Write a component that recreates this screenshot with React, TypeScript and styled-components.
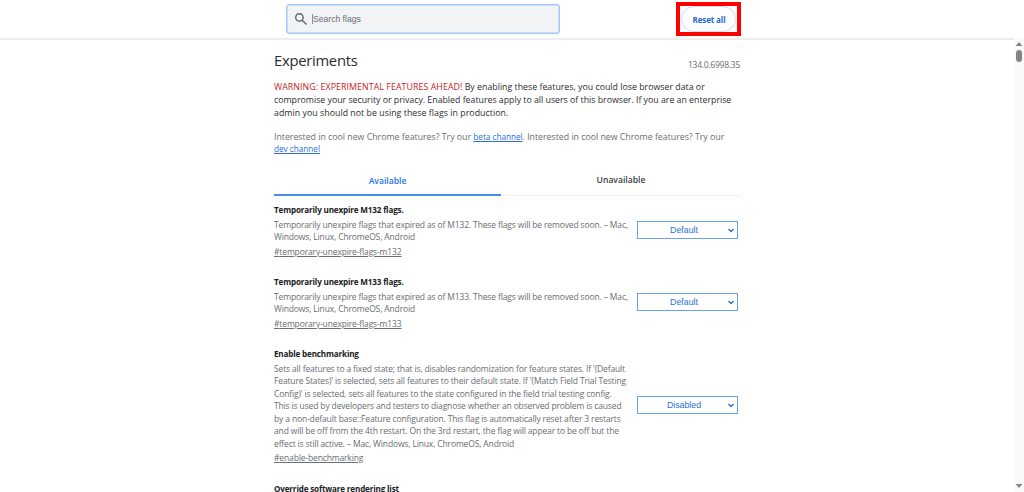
import React from "react";
import styled, { createGlobalStyle } from "styled-components";

const GlobalStyle = createGlobalStyle`
  * {
    box-sizing: border-box;
  }

  body {
    margin: 0;
    overflow: hidden;
    background: #fff;
    color: #2c2d30;
    font-family: "Open Sans", "Noto Sans", sans-serif;
  }
`;

const Page = styled.div`
  display: grid;
  grid-template-columns: 1014px 10px;
  grid-template-rows: 38px 454px;
  width: 1024px;
  height: 492px;
  overflow: hidden;
`;

const Header = styled.header`
  grid-column: 1 / 3;
  display: flex;
  align-items: flex-start;
  padding: 2px 283px 0 286px;
`;

const SearchBox = styled.div`
  display: flex;
  align-items: center;
  width: 274px;
  height: 30px;
  margin-top: 2px;
  padding-left: 7px;
  background: #f1f3f4;
  border: 1px solid #a3c5f8;
  border-radius: 3px;
  box-shadow: inset 0 0 0 0.5px #a3c5f8;
`;

const Caret = styled.span`
  width: 1px;
  height: 10px;
  margin-left: 4px;
  background: #8b8d90;
`;

const Placeholder = styled.span`
  font-family: "Liberation Sans", Arial, sans-serif;
  font-size: 8.6px;
  line-height: 12px;
  color: #6b6e72;
`;

const ResetFrame = styled.div`
  display: flex;
  align-items: center;
  justify-content: center;
  width: 65px;
  height: 34px;
  margin-left: auto;
  border: 4px solid #fe0000;
`;

const ResetButton = styled.button`
  width: 55px;
  height: 26px;
  padding: 0 0 0 1px;
  background: #fff;
  border: 1px solid #c9dcfa;
  border-radius: 13px;
  color: #2468d4;
  font-family: inherit;
  font-size: 8px;
  font-weight: 700;
  letter-spacing: -0.1px;
  white-space: nowrap;
`;

const Main = styled.main`
  padding: 0 273px 0 274px;
  border-top: 2px solid #ededee;
  overflow: hidden;
`;

const TitleBar = styled.div`
  display: flex;
  align-items: center;
  justify-content: space-between;
  height: 41px;
`;

const Title = styled.h1`
  margin: 0 0 2px;
  color: #2c2d30;
  font-size: 14.8px;
  font-weight: 400;
  letter-spacing: -0.28px;
`;

const Version = styled.span`
  margin: 8px 1px 0 0;
  color: #6b6e72;
  font-size: 8.5px;
  letter-spacing: -0.25px;
`;

interface LineProps {
  $spacing?: number;
}

const Line = styled.span<LineProps>`
  display: block;
  letter-spacing: ${(props) => props.$spacing ?? 0}px;
  white-space: nowrap;
`;

const Blurb = styled.p`
  margin: 0;
  font-size: 8.8px;
  line-height: 13.1px;
`;

const Promo = styled.p`
  margin: 10.5px 0 0;
  color: #6b6e72;
  font-size: 8.8px;
  line-height: 12.7px;
`;

const Warning = styled.span`
  color: #c5221f;
  letter-spacing: 0.08px;
`;

const ChannelLink = styled.a`
  color: #2a6fdc;
  font-size: 8.2px;
  text-decoration: underline;
`;

const Tabs = styled.div`
  display: flex;
  height: 39.5px;
`;

interface TabProps {
  $active?: boolean;
}

const Tab = styled.div<TabProps>`
  display: flex;
  align-items: center;
  justify-content: center;
  width: ${(props) => (props.$active ? "227px" : "240px")};
  padding-top: ${(props) => (props.$active ? "12px" : "10px")};
  border-bottom: ${(props) => (props.$active ? "2px solid #4a8bee" : "1px solid #f1f1f2")};
  color: ${(props) => (props.$active ? "#1a73e8" : "#3c4043")};
  font-size: 8.6px;
  font-weight: 600;
`;

const FlagList = styled.div`
  padding-top: 8.7px;
`;

const FlagRow = styled.section`
  display: flex;
  align-items: center;
  justify-content: space-between;
  margin-bottom: 18.3px;
  padding-right: 3px;
`;

const FlagText = styled.div`
  width: 360px;
  color: #6b6e72;
  font-size: 8.5px;
  line-height: 12.5px;
  letter-spacing: -0.14px;
`;

const FlagName = styled.h2`
  margin: 0 0 2px;
  color: #202124;
  font-size: 8.1px;
  font-weight: 700;
  line-height: 12.5px;
  letter-spacing: -0.16px;
  white-space: nowrap;
`;

const FlagLine = styled.span`
  display: block;
  white-space: nowrap;
`;

const Permalink = styled.a`
  display: block;
  width: max-content;
  margin-top: 1.7px;
  text-decoration: underline;
`;

const Select = styled.div`
  display: flex;
  align-items: center;
  width: 101px;
  height: 18px;
  margin-bottom: 2.4px;
  padding: 0 3px 0 2px;
  border: 1px solid #6ba0f0;
  color: #2a6fdc;
  font-family: "Liberation Sans", Arial, sans-serif;
  font-size: 8.8px;
`;

const SelectValue = styled.span`
  flex: 1;
  text-align: center;
`;

const Scrollbar = styled.div`
  display: flex;
  flex-direction: column;
  align-items: center;
  padding: 4px 0 4px;
  background: #fafafa;
`;

const Thumb = styled.div`
  width: 6px;
  height: 12px;
  margin-top: 4px;
  margin-bottom: auto;
  background: #858585;
  border-radius: 3px;
`;

interface Flag {
  name: string;
  lines: string[];
  id: string;
  value: string;
}

const flags: Flag[] = [
  {
    name: "Temporarily unexpire M132 flags.",
    lines: [
      "Temporarily unexpire flags that expired as of M132. These flags will be removed soon. – Mac,",
      "Windows, Linux, ChromeOS, Android",
    ],
    id: "temporary-unexpire-flags-m132",
    value: "Default",
  },
  {
    name: "Temporarily unexpire M133 flags.",
    lines: [
      "Temporarily unexpire flags that expired as of M133. These flags will be removed soon. – Mac,",
      "Windows, Linux, ChromeOS, Android",
    ],
    id: "temporary-unexpire-flags-m133",
    value: "Default",
  },
  {
    name: "Enable benchmarking",
    lines: [
      "Sets all features to a fixed state; that is, disables randomization for feature states. If '(Default",
      "Feature States)' is selected, sets all features to their default state. If '(Match Field Trial Testing",
      "Config)' is selected, sets all features to the state configured in the field trial testing config.",
      "This is used by developers and testers to diagnose whether an observed problem is caused",
      "by a non-default base::Feature configuration. This flag is automatically reset after 3 restarts",
      "and will be off from the 4th restart. On the 3rd restart, the flag will appear to be off but the",
      "effect is still active. – Mac, Windows, Linux, ChromeOS, Android",
    ],
    id: "enable-benchmarking",
    value: "Disabled",
  },
];

function FlagEntry({ flag }: { flag: Flag }) {
  return (
    <FlagRow>
      <FlagText>
        <FlagName>{flag.name}</FlagName>
        {flag.lines.map((line) => (
          <FlagLine key={line}>{line}</FlagLine>
        ))}
        <Permalink>#{flag.id}</Permalink>
      </FlagText>
      <Select>
        <SelectValue>{flag.value}</SelectValue>
        <svg width="6" height="6" viewBox="0 0 6 6" fill="none" stroke="#2a6fdc" strokeWidth="1.4">
          <path d="M0.5 2l2.5 2.5L5.5 2" />
        </svg>
      </Select>
    </FlagRow>
  );
}

function App() {
  return (
    <Page>
      <GlobalStyle />
      <Header>
        <SearchBox>
          <svg width="14" height="14" viewBox="0 0 14 14" fill="none" stroke="#5f6368" strokeWidth="1.4">
            <circle cx="5.4" cy="5.4" r="3.7" />
            <path d="M8.2 8.2l4.3 4.3" />
          </svg>
          <Caret />
          <Placeholder>Search flags</Placeholder>
        </SearchBox>
        <ResetFrame>
          <ResetButton>Reset all</ResetButton>
        </ResetFrame>
      </Header>
      <Main>
        <TitleBar>
          <Title>Experiments</Title>
          <Version>134.0.6998.35</Version>
        </TitleBar>
        <Blurb>
          <Line>
            <Warning>WARNING: EXPERIMENTAL FEATURES AHEAD!</Warning> By enabling these features, you could lose browser
            data or
          </Line>
          <Line $spacing={-0.015}>
            compromise your security or privacy. Enabled features apply to all users of this browser. If you are an
            enterprise
          </Line>
          <Line $spacing={0.03}>admin you should not be using these flags in production.</Line>
        </Blurb>
        <Promo>
          <Line $spacing={-0.015}>
            Interested in cool new Chrome features? Try our <ChannelLink>beta channel</ChannelLink>. Interested in cool
            new Chrome features? Try our
          </Line>
          <Line>
            <ChannelLink>dev channel</ChannelLink>
          </Line>
        </Promo>
        <Tabs>
          <Tab $active>Available</Tab>
          <Tab>Unavailable</Tab>
        </Tabs>
        <FlagList>
          {flags.map((flag) => (
            <FlagEntry key={flag.id} flag={flag} />
          ))}
          <FlagName>Override software rendering list</FlagName>
        </FlagList>
      </Main>
      <Scrollbar>
        <svg width="8" height="4" viewBox="0 0 8 4">
          <path d="M4 0l3.5 4h-7z" fill="#858585" />
        </svg>
        <Thumb />
        <svg width="8" height="4" viewBox="0 0 8 4">
          <path d="M4 4l3.5-4h-7z" fill="#858585" />
        </svg>
      </Scrollbar>
    </Page>
  );
}

export default App;
